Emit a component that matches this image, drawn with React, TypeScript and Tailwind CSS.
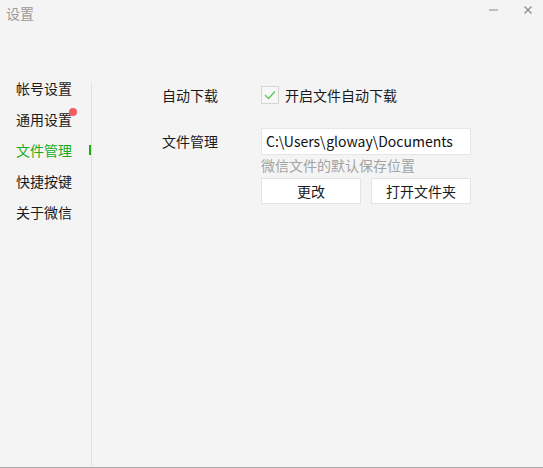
import React from "react";

const font = { fontFamily: '"Microsoft YaHei", "Noto Sans CJK SC", "Noto Sans", sans-serif' };

const menu = ["帐号设置", "通用设置", "文件管理", "快捷按键", "关于微信"];

export default function App() {
  return (
    <div
      className="w-[543px] h-[468px] bg-[#f4f4f4] border-b border-[#a9a9a9] flex flex-col text-[14px] text-[#1a1a1a] overflow-hidden"
      style={font}
    >
      {/* title bar */}
      <div className="h-[72px] flex items-start justify-between">
        <span className="ml-[6px] mt-[4px] text-[#9a9a9a] text-[14px] leading-[18px]">设置</span>
        <div className="flex items-start">
          <div className="mt-[9px] mr-[26px] w-[9px] h-[2px] bg-[#bdbdbd]" />
          <svg className="mt-[6px] mr-[11px]" width="8" height="8" viewBox="0 0 8 8">
            <path d="M0.5 0.5L7.5 7.5M7.5 0.5L0.5 7.5" stroke="#8a8a8a" strokeWidth="1.2" />
          </svg>
        </div>
      </div>

      <div className="flex flex-1">
        {/* sidebar */}
        <ul className="w-[91px] flex flex-col">
          {menu.map((m, i) => (
            <li key={m} className="relative h-[31px] flex items-center pl-[16px] leading-[18px]">
              <span className={i === 2 ? "text-[#1aad19]" : ""}>{m}</span>
              {i === 1 && (
                <span className="absolute left-[69px] top-[5px] w-[8px] h-[8px] rounded-full bg-[#f25d5d]" />
              )}
              {i === 2 && <span className="absolute right-0 top-[11px] w-[2px] h-[10px] bg-[#1aad19]" />}
            </li>
          ))}
        </ul>
        <div className="mt-[11px] w-px bg-[#e0e0e0]" />

        {/* content */}
        <div className="pl-[70px] pt-[14px] flex flex-col">
          <div className="flex items-center h-[18px]">
            <span className="w-[99px] leading-[18px]">自动下载</span>
            <div className="w-[18px] h-[18px] border border-[#d6d6d6] bg-[#f7f7f7] flex items-center justify-center">
              <svg width="12" height="10" viewBox="0 0 12 10">
                <path d="M1 5L4.5 8.5L11 1.5" fill="none" stroke="#5cc85c" strokeWidth="1.3" />
              </svg>
            </div>
            <span className="ml-[6px] leading-[18px]">开启文件自动下载</span>
          </div>

          <div className="flex mt-[24px]">
            <span className="w-[99px] h-[27px] flex items-center">文件管理</span>
            <div className="flex flex-col">
              <div className="w-[210px] h-[27px] bg-white border border-[#e6e6e6] flex items-center pl-[4px] text-[14px] text-[#111]">
                C:\Users\gloway\Documents
              </div>
              <span className="mt-[1px] text-[#a3a3a3] leading-[18px]">微信文件的默认保存位置</span>
              <div className="flex gap-[10px] mt-[4px]">
                <button className="w-[100px] h-[26px] bg-white border border-[#e3e3e3] leading-[18px]">更改</button>
                <button className="w-[100px] h-[26px] bg-white border border-[#e3e3e3] leading-[18px]">打开文件夹</button>
              </div>
            </div>
          </div>
        </div>
      </div>
    </div>
  );
}
